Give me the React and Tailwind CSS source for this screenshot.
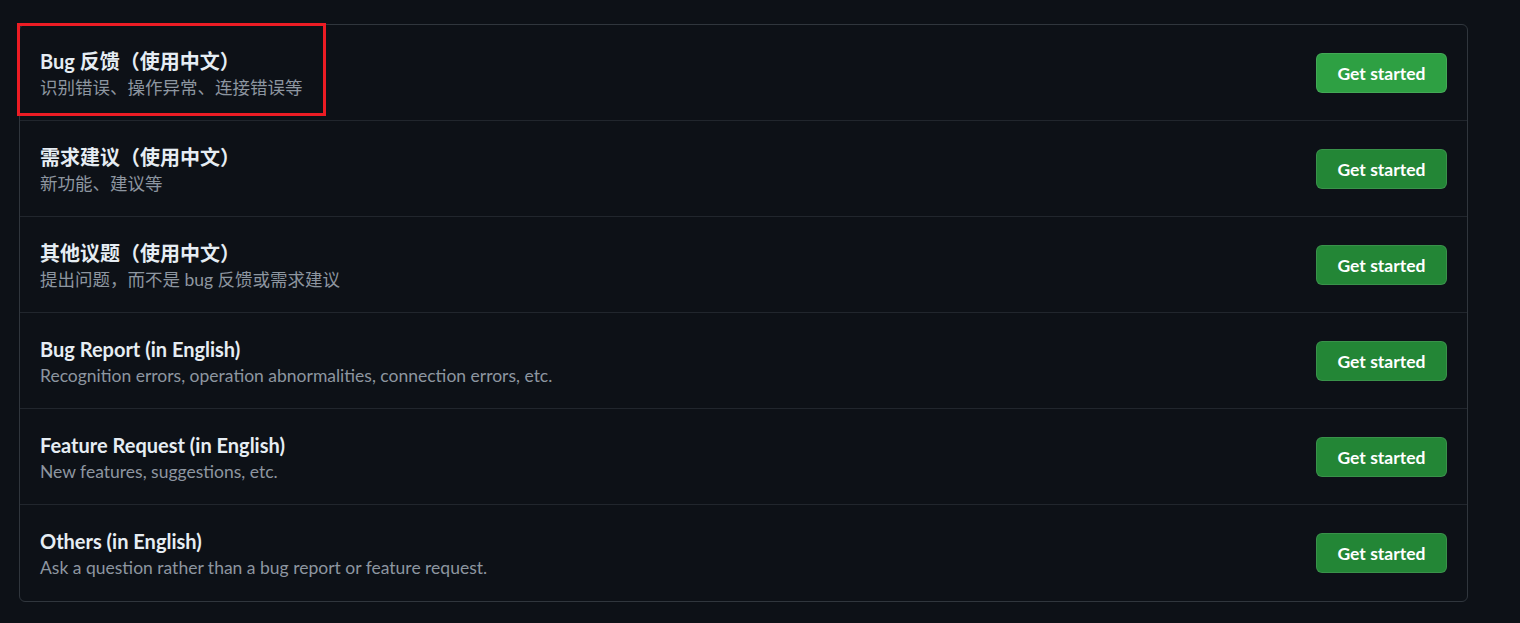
const TEMPLATES = [
  { title: 'Bug 反馈（使用中文）', desc: '识别错误、操作异常、连接错误等' },
  { title: '需求建议（使用中文）', desc: '新功能、建议等' },
  { title: '其他议题（使用中文）', desc: '提出问题，而不是 bug 反馈或需求建议' },
  { title: 'Bug Report (in English)', desc: 'Recognition errors, operation abnormalities, connection errors, etc.' },
  { title: 'Feature Request (in English)', desc: 'New features, suggestions, etc.' },
  { title: 'Others (in English)', desc: 'Ask a question rather than a bug report or feature request.' },
];

export default function App() {
  return (
    <div
      className="min-h-[623px] w-full bg-[#0d1117] pt-6 pl-[19px] pr-[52px]"
      style={{ fontFamily: 'Lato, "Noto Sans CJK SC", sans-serif' }}
    >
      <div className="relative">
        <div className="rounded-md border border-[#30363d]">
          {TEMPLATES.map((t, i) => (
            <div
              key={t.title}
              className={
                'flex items-center justify-between px-5 ' +
                (i > 0 ? 'border-t border-[#21262d] ' : '') +
                (i === TEMPLATES.length - 1 ? 'h-[97px]' : i > 0 ? 'h-[96px]' : 'h-[95px]')
              }
            >
              <div className="flex flex-col pt-[2px]">
                <h3 className="text-[20px] font-bold leading-[28px] text-[#e6edf3]">{t.title}</h3>
                <p className="text-[17.5px] leading-[26px] text-[#8d96a0]">{t.desc}</p>
              </div>
              <button
                className={
                  'h-10 w-[131px] rounded-md border border-[#ffffff1a] pt-[3px] text-[17.5px] font-bold text-white ' +
                  (i === 0 ? 'bg-[#2ea043]' : 'bg-[#238636]')
                }
              >
                Get started
              </button>
            </div>
          ))}
        </div>
        <div className="pointer-events-none absolute left-[-2px] top-[-1px] h-[93px] w-[309px] border-[3px] border-[#ec1c24]" />
      </div>
    </div>
  );
}
